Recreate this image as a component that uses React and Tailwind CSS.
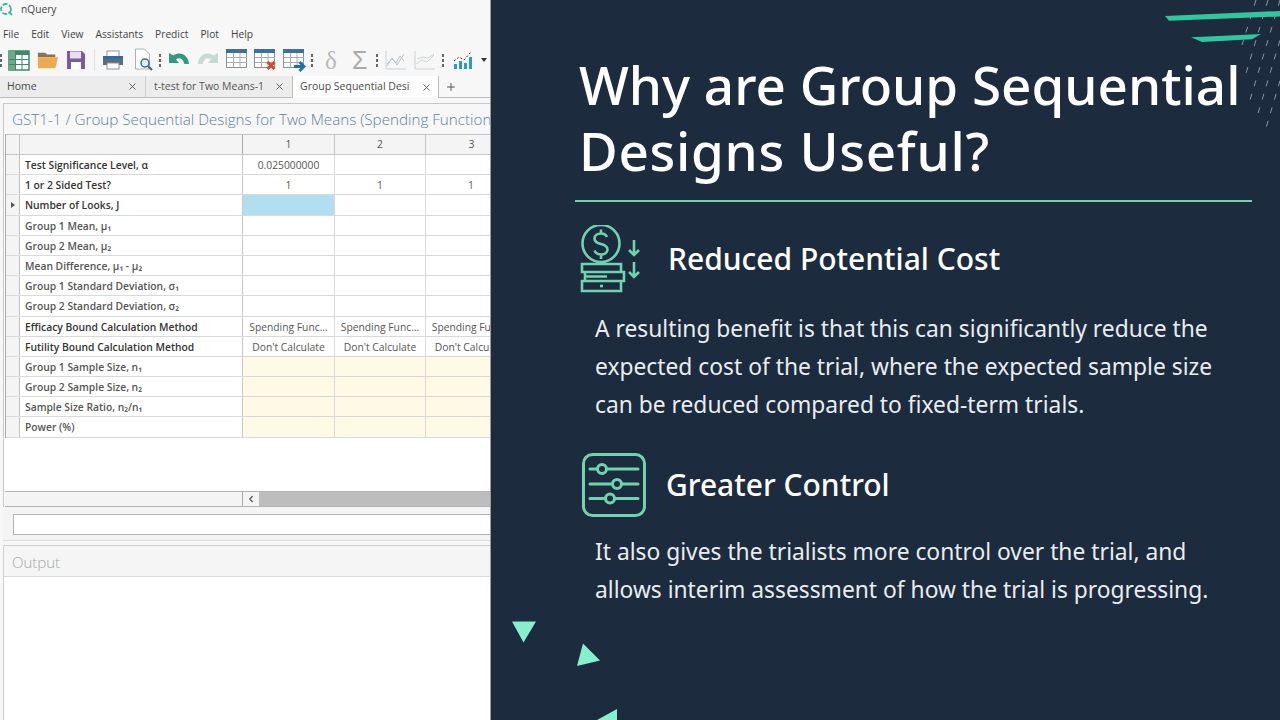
import { Plus, X, ChevronLeft } from 'lucide-react'

const rows = [
  { label: 'Test Significance Level, α', strong: true, cells: ['0.025000000', '', ''] },
  { label: '1 or 2 Sided Test?', strong: true, cells: ['1', '1', '1'] },
  { label: 'Number of Looks, J', strong: true, cells: ['', '', ''], active: true },
  { label: 'Group 1 Mean, μ₁', cells: ['', '', ''] },
  { label: 'Group 2 Mean, μ₂', cells: ['', '', ''] },
  { label: 'Mean Difference, μ₁ - μ₂', cells: ['', '', ''] },
  { label: 'Group 1 Standard Deviation, σ₁', cells: ['', '', ''] },
  { label: 'Group 2 Standard Deviation, σ₂', cells: ['', '', ''] },
  { label: 'Efficacy Bound Calculation Method', strong: true, cells: ['Spending Func...', 'Spending Func...', 'Spending Func...'] },
  { label: 'Futility Bound Calculation Method', strong: true, cells: ["Don't Calculate", "Don't Calculate", "Don't Calculate"] },
  { label: 'Group 1 Sample Size, n₁', cells: ['', '', ''], output: true },
  { label: 'Group 2 Sample Size, n₂', cells: ['', '', ''], output: true },
  { label: 'Sample Size Ratio, n₂/n₁', cells: ['', '', ''], output: true },
  { label: 'Power (%)', cells: ['', '', ''], output: true },
]

const menu = ['File', 'Edit', 'View', 'Assistants', 'Predict', 'Plot', 'Help']

function Grip() {
  return (
    <div className="flex flex-col gap-[2px] shrink-0">
      <div className="w-[2px] h-[3px] bg-[#666]" />
      <div className="w-[2px] h-[3px] bg-[#666]" />
      <div className="w-[2px] h-[3px] bg-[#666]" />
    </div>
  )
}

function SheetIcon({ mark }) {
  return (
    <svg width="24" height="24" viewBox="0 0 24 24" className="shrink-0">
      <rect x="1.500" y="1.500" width="20" height="18" fill="#fff" stroke="#8a9199" />
      <rect x="1" y="1" width="21" height="4" fill="#3e6f9e" />
      <path d="M2 9.500h20M2 14.500h20M8.500 5v14M15 5v14" stroke="#a6adb3" fill="none" />
      {mark === 'x' && <path d="M14.500 14l7 7M21.500 14l-7 7" stroke="#d8472b" strokeWidth="2.800" />}
      {mark === 'arrow' && <path d="M12 18.500h9M17.500 14l4.500 4.500-4.500 4.500" stroke="#1f6fb2" strokeWidth="2.800" fill="none" />}
    </svg>
  )
}

function Toolbar() {
  return (
    <div className="h-[26px] mt-[5px] flex items-center relative overflow-hidden">
      <Grip />
      <svg width="22" height="21" viewBox="0 0 22 21" className="ml-[6px] shrink-0">
        <rect x="1" y="1" width="20" height="19" fill="#fff" stroke="#3d8a66" strokeWidth="1.500" />
        <rect x="1" y="1" width="20" height="4" fill="#3d8a66" />
        <rect x="1" y="1" width="6" height="19" fill="#6ea98b" />
        <path d="M1 9.500h20M1 14.500h20M7.500 1v19M14 1v19" stroke="#3d8a66" fill="none" />
      </svg>
      <svg width="22" height="20" viewBox="0 0 24 20" className="ml-[7px] shrink-0">
        <path d="M1 2h8l2 2h9v3H1z" fill="#8a7350" />
        <path d="M1 19V7h22l-3 12z" fill="#eeaa4e" />
      </svg>
      <svg width="20" height="20" viewBox="0 0 20 20" className="ml-[7px] shrink-0">
        <path d="M1 1h15l3 3v15H1z" fill="#7d5a9e" />
        <rect x="4" y="1.500" width="11" height="7" fill="#e6e0ec" />
        <rect x="5" y="12" width="10" height="7" fill="#fff" />
      </svg>
      <div className="w-px h-[22px] bg-[#e0e0e0] ml-[8px] mr-[7px] shrink-0" />
      <svg width="22" height="22" viewBox="0 0 22 22" className="shrink-0">
        <rect x="5" y="2" width="12" height="6" fill="#fff" stroke="#8d9399" />
        <rect x="1" y="7" width="20" height="9" fill="#5f6b77" />
        <rect x="1" y="7" width="20" height="3" fill="#2c6eab" />
        <rect x="5" y="14" width="12" height="6" fill="#fff" stroke="#8d9399" />
      </svg>
      <svg width="20" height="24" viewBox="0 0 20 24" className="ml-[10px] shrink-0">
        <path d="M1.500 1h9l5 5v15h-14z" fill="#fff" stroke="#aab2b8" />
        <circle cx="11" cy="15" r="4" fill="#e6f1f8" stroke="#2e6c97" strokeWidth="1.500" />
        <path d="M14 18l4 4" stroke="#2e6c97" strokeWidth="2.200" />
      </svg>
      <div className="ml-[5px]"><Grip /></div>
      <svg width="22" height="18" viewBox="0 0 22 18" className="ml-[7px] shrink-0">
        <path d="M1 2v10h10L8 8.500c3-2.500 7-1 8.500 4.500H21C20.500 5 13-.500 5.500 4.500z" fill="#2f9a7e" />
      </svg>
      <svg width="22" height="18" viewBox="0 0 22 18" className="ml-[7px] shrink-0">
        <path d="M21 2v10H11l3-3.500c-3-2.500-7-1-8.500 4.500H1C1.500 5 9-.500 16.500 4.500z" fill="#c4dad3" />
      </svg>
      <div className="ml-[6px]"><SheetIcon /></div>
      <div className="ml-[4px]"><SheetIcon mark="x" /></div>
      <div className="ml-[5px]"><SheetIcon mark="arrow" /></div>
      <div className="ml-[5px]"><Grip /></div>
      <span className="ml-[12px] w-[12px] text-[25px] leading-none text-[#b9b9b9] font-['Liberation_Serif',serif]">δ</span>
      <span className="ml-[15px] w-[15px] text-[25px] leading-none text-[#a9a9a9] font-['Liberation_Sans',sans-serif]">Σ</span>
      <div className="ml-[9px]"><Grip /></div>
      <svg width="22" height="20" viewBox="0 0 22 20" className="ml-[7px] shrink-0">
        <path d="M1 1v18h20" stroke="#c9d3da" fill="none" />
        <path d="M2 14l5-5 4 4 4-7 4 5M2 16l5-8 5 7 7-11" stroke="#b5c4ce" fill="none" />
      </svg>
      <svg width="22" height="20" viewBox="0 0 22 20" className="ml-[7px] shrink-0">
        <path d="M1 1v18h20" stroke="#c9d3da" fill="none" />
        <path d="M2 14l6-4 5 2 7-7M3 9l6-2 5 1 6-4" stroke="#ccd5d2" fill="none" />
      </svg>
      <div className="ml-[6px]"><Grip /></div>
      <svg width="22" height="20" viewBox="0 0 22 20" className="ml-[8px] shrink-0">
        <path d="M2 19v-5h3v5zM7 19v-8h3v8zM12 19v-6h3v6zM17 19V7h3v12z" fill="#2a9cc4" />
        <path d="M2 11l5-4 5 3 7-8" stroke="#333" strokeDasharray="2 2" fill="none" />
      </svg>
      <div className="ml-[7px] w-0 h-0 border-x-[3px] border-x-transparent border-t-[4px] border-t-[#333]" />
    </div>
  )
}

function Tabs() {
  return (
    <div className="h-[21px] mt-[4px] flex items-end border-b border-b-[#bdbdbd] text-[10.500px] text-[#4a4a4a]">
      <div className="w-[146px] h-[21px] bg-[#ececec] border-r border-r-[#d0d0d0] flex items-center justify-between pl-[7px] pr-[7px]">
        <span>Home</span>
        <X size={11} strokeWidth={2} className="text-[#555]" />
      </div>
      <div className="w-[147px] h-[21px] bg-[#ececec] border-r border-r-[#bdbdbd] flex items-center pl-[8px] pr-[7px] justify-between">
        <span className="whitespace-nowrap overflow-hidden w-[112px] text-[#555]">t-test for Two Means-1</span>
        <X size={11} strokeWidth={2} className="text-[#555]" />
      </div>
      <div className="w-[146px] h-[22px] bg-white border-r border-r-[#bdbdbd] flex items-center pl-[7px] pr-[6px] justify-between -mb-px">
        <span className="whitespace-nowrap overflow-hidden w-[112px] font-medium">Group Sequential Desi</span>
        <X size={11} strokeWidth={2} className="text-[#555]" />
      </div>
      <div className="h-[21px] flex items-center ml-[6px]">
        <Plus size={12} className="text-[#555]" />
      </div>
    </div>
  )
}

function InputGrid() {
  return (
    <div className="ml-[4px] border-l border-l-[#a9a9a9] text-[10.300px] text-[#555]">
      <div className="flex h-[21px] bg-[#f4f4f4] border-y border-y-[#c4c4c4]">
        <div className="w-[14px] border-r border-r-[#c4c4c4] shrink-0" />
        <div className="w-[223px] border-r border-r-[#a9a9a9] shrink-0" />
        <div className="w-[92px] border-r border-r-[#c4c4c4] shrink-0 text-center leading-[19px]">1</div>
        <div className="w-[91px] border-r border-r-[#c4c4c4] shrink-0 text-center leading-[19px]">2</div>
        <div className="w-[91px] shrink-0 text-center leading-[19px]">3</div>
      </div>
      {rows.map((row) => (
        <div key={row.label} className="flex h-[20.200px] border-b border-b-[#d9d9d9]">
          <div className="w-[14px] shrink-0 bg-[#f4f4f4] border-r border-r-[#c4c4c4] flex items-center justify-center">
            {row.active && <div className="w-0 h-0 border-y-[3px] border-y-transparent border-l-[4px] border-l-[#555]" />}
          </div>
          <div className={`w-[223px] shrink-0 border-r border-r-[#c9c9c9] pl-[5px] leading-[20px] whitespace-nowrap overflow-hidden font-semibold ${row.strong ? 'text-[#333]' : 'text-[#555]'}`}>
            {row.label}
          </div>
          {row.cells.map((cell, i) => (
            <div
              key={i}
              className={`shrink-0 text-center leading-[20px] whitespace-nowrap overflow-hidden border-r border-r-[#d9d9d9] ${i === 0 ? 'w-[92px]' : 'w-[91px]'} ${row.active && i === 0 ? 'bg-[#b1dff0]' : ''} ${row.output ? 'bg-[#fefae6]' : ''}`}
            >
              {cell}
            </div>
          ))}
        </div>
      ))}
    </div>
  )
}

function LeftPanel() {
  return (
    <div className="w-[491px] h-full shrink-0 bg-[#f7f7f7] border-r border-r-[#9b9b9b] overflow-hidden font-['Open_Sans',sans-serif]">
      <div className="h-[16px] flex items-center">
        <svg width="14" height="15" viewBox="0 0 14 15" className="mt-[2px]">
          <circle cx="6" cy="7" r="5" fill="none" stroke="#45b69a" strokeWidth="1.800" strokeDasharray="5 1.500" />
          <path d="M9 10l3 3" stroke="#45b69a" strokeWidth="1.800" />
        </svg>
        <span className="ml-[7px] mt-[3px] text-[10.200px] text-[#444]">nQuery</span>
      </div>
      <div className="flex h-[17px] mt-[9px] items-center text-[10.200px] text-[#444] pl-[3px] gap-[12px] translate-y-px">
        {menu.map((m) => (
          <span key={m}>{m}</span>
        ))}
      </div>
      <Toolbar />
      <Tabs />
      <div className="ml-[3px] mt-[5px] bg-white border-t border-l border-[#c8c8c8] h-[438px] flex flex-col">
        <div className="h-[30px] bg-[#f7f7f7] pl-[8px] text-[15.200px] font-light leading-[30px] text-[#5d82a0] whitespace-nowrap overflow-hidden">
          GST1-1 / Group Sequential Designs for Two Means (Spending Function
        </div>
        <div className="-ml-[3px]">
          <InputGrid />
        </div>
        <div className="flex-1" />
        <div className="h-[16px] ml-[1px] flex border-y border-y-[#b4b4b4] bg-[#f4f4f4] shrink-0">
          <div className="w-[238px] border-r border-r-[#a9a9a9]" />
          <div className="w-[16px] flex items-center justify-center">
            <ChevronLeft size={10} strokeWidth={3} className="text-[#555]" />
          </div>
          <div className="flex-1 bg-[#bdbdbd]" />
        </div>
        <div className="h-[34px] -ml-px bg-[#f4f4f4] border-b border-b-[#dcdcdc] pt-[7px] pl-[10px] shrink-0">
          <div className="h-[21px] bg-white border border-[#b4b4b4] border-r-0" />
        </div>
      </div>
      <div className="ml-[3px] mt-[4px] border-t border-l border-[#cfcfcf] bg-white h-[180px]">
        <div className="h-[31px] bg-[#f5f5f5] border-b border-b-[#dcdcdc] pl-[8px] text-[15px] font-light leading-[33px] text-[#a8a8a8]">
          Output
        </div>
      </div>
    </div>
  )
}

function CostIcon() {
  return (
    <svg width="62" height="68" viewBox="0 0 62 68" fill="none" stroke="#6fd3ae" strokeWidth="2.600" className="shrink-0">
      <circle cx="21" cy="18.500" r="18.500" />
      <path d="M27 12c-1-2.500-3.500-3.500-6-3.500-3.500 0-6.500 2-6.500 5s2.500 4.500 6.500 5.500 6.500 2.500 6.500 5.500-3 5-6.500 5c-3 0-5.500-1.500-6.500-4M21 4.500v4M21 30v4" />
      <path d="M2 39h39v8H2zM10 47h34v9H10M5 47v9M5 51.500h22M2 56h39v10H2z" />
      <path d="M20 61h3" />
      <path d="M54 15v15M49 25l5 5 5-5M54 37v15M49 47l5 5 5-5" />
    </svg>
  )
}

function SlidersIcon() {
  return (
    <svg width="64" height="64" viewBox="0 0 64 64" fill="none" stroke="#6fd3ae" strokeWidth="3" className="shrink-0">
      <rect x="1.500" y="1.500" width="61" height="61" rx="9" />
      <path d="M8 16h7.500M25 16h31M8 31h22.500M40 31h16M8 45.500h15M32.500 45.500H56" strokeLinecap="round" />
      <circle cx="20" cy="16" r="4.500" />
      <circle cx="35" cy="31" r="4.500" />
      <circle cx="28" cy="45.500" r="4.500" />
    </svg>
  )
}

function RightPanel() {
  return (
    <div className="flex-1 h-full relative overflow-hidden bg-[#1c2b3e] text-white font-['Noto_Sans',sans-serif]">
      {/* stripes and triangles sit on top of the slide background */}
      <svg width="789" height="720" viewBox="491 0 789 720" className="absolute inset-0">
        <path d="M1165 16L1280 11v5.500L1169 20.700z" fill="#2fc79c" />
        <path d="M1191 37.300L1261 34l-9 5.300-50 2.700z" fill="#2fc79c" />
        <path d="M512 621.500h24l-12.500 21z" fill="#86f0cd" />
        <path d="M583 643.500l17 17-23 5.500z" fill="#86f0cd" />
        <path d="M597 720l20-11v11z" fill="#86f0cd" />
        <g stroke="#8299ab" strokeWidth="1" strokeDasharray="6 8" fill="none">
          <path d="M1256 0l-14 45" />
          <path d="M1268 0l-24 80" />
          <path d="M1280 0l-30 100" />
          <path d="M1292 0l-36 120" />
          <path d="M1304 0l-38 128" />
        </g>
      </svg>
      <div className="relative pl-[84px] pr-[28px] pt-[52px]">
        <h1 className="pl-[4px] text-[53px] leading-[66px] font-medium whitespace-nowrap">
          Why are Group Sequential
          <br />
          <span className="tracking-[0.7px]">Designs Useful?</span>
        </h1>
        <div className="h-[2px] bg-[#6fd3ae] mt-[16px]" />
        <div className="flex items-center mt-[23px] pl-[5px]">
          <CostIcon />
          <h2 className="ml-[26px] text-[30px] leading-[40px] font-medium whitespace-nowrap">Reduced Potential Cost</h2>
        </div>
        <p className="pl-[20px] mt-[17px] text-[22.800px] leading-[38px] whitespace-nowrap text-[#e9edf0]">
          A resulting benefit is that this can significantly reduce the
          <br />
          expected cost of the trial, where the expected sample size
          <br />
          can be reduced compared to fixed-term trials.
        </p>
        <div className="flex items-center mt-[29px] pl-[7px]">
          <SlidersIcon />
          <h2 className="ml-[20px] text-[30px] leading-[40px] font-medium whitespace-nowrap">Greater Control</h2>
        </div>
        <p className="pl-[20px] mt-[16px] text-[22.800px] leading-[38px] whitespace-nowrap text-[#e9edf0]">
          It also gives the trialists more control over the trial, and
          <br />
          allows interim assessment of how the trial is progressing.
        </p>
      </div>
    </div>
  )
}

export default function App() {
  return (
    <div className="w-[1280px] h-[720px] flex overflow-hidden">
      <LeftPanel />
      <RightPanel />
    </div>
  )
}
